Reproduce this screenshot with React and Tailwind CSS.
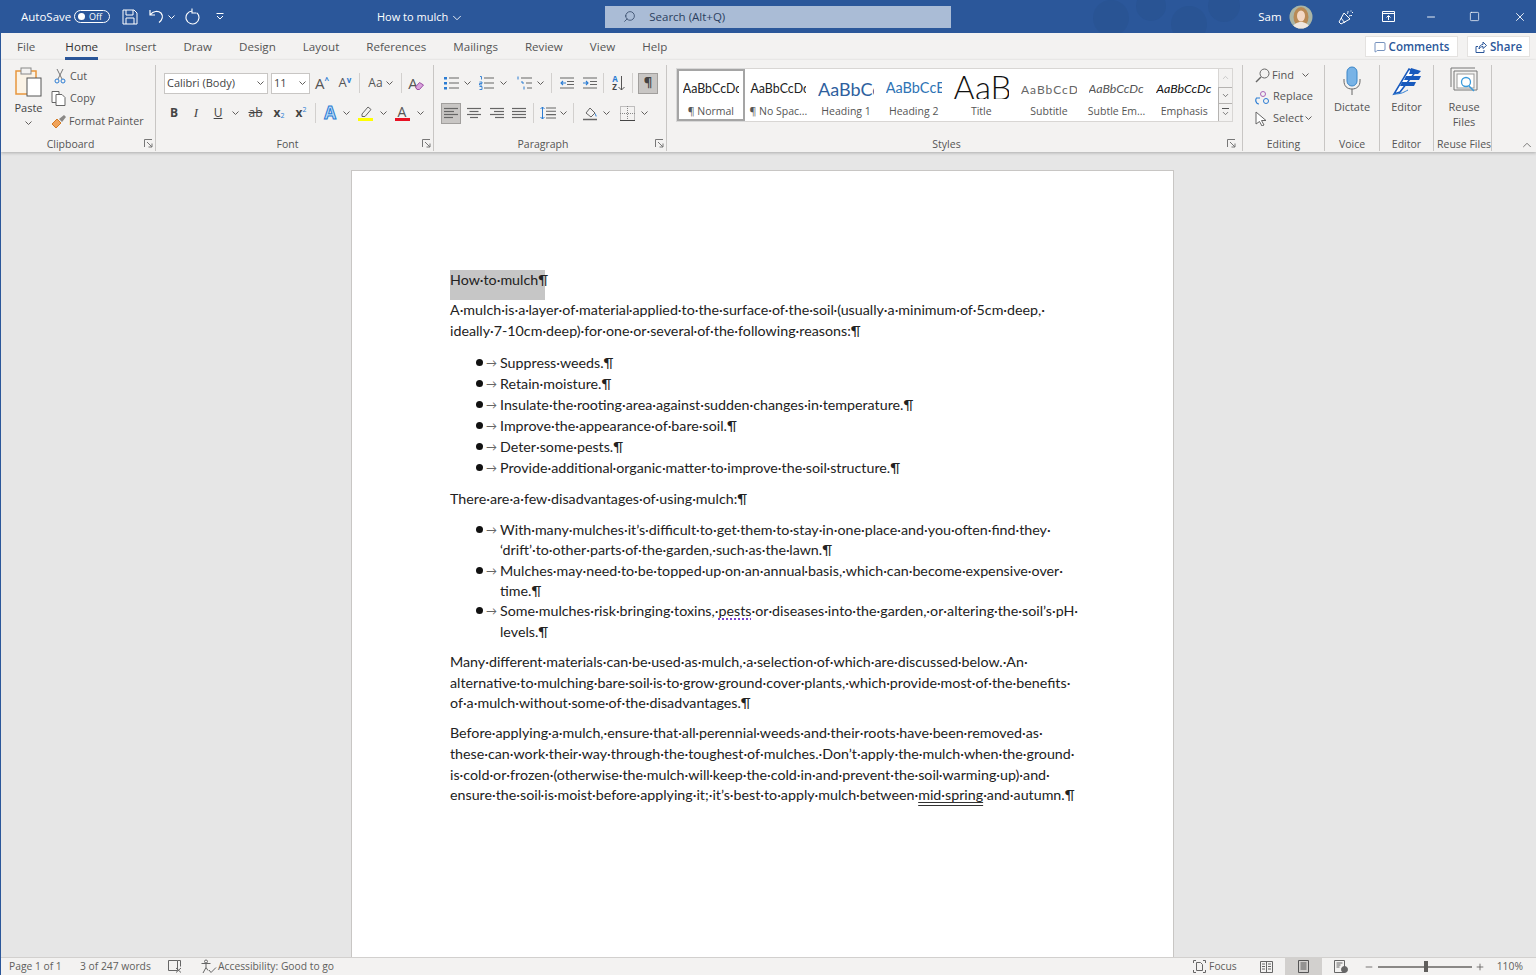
import {
  ChevronDown,
  ChevronUp,
  MessageSquare,
  Minus,
  Plus,
  Search,
  Square,
  X,
} from "lucide-react";

function Caret({ className = "", color = "#605e5c" }) {
  return (
    <svg width="7" height="4" viewBox="0 0 7 4" className={className} fill="none" stroke={color} strokeWidth="1">
      <path d="M0.500 0.500l3 3 3-3" />
    </svg>
  );
}

function Tool({ className = "", children }) {
  return <div className={`flex h-5 shrink-0 items-center justify-center ${className}`}>{children}</div>;
}

function Sep() {
  return <div className="h-5 w-px shrink-0 bg-[#d2d0ce]" />;
}

function Launcher({ className = "right-[2px]" }) {
  return (
    <svg width="9" height="9" viewBox="0 0 9 9" fill="none" stroke="#777" strokeWidth="1" className={`absolute top-[2px] ${className}`}>
      <path d="M0.500 8V0.500H8M3 3l5 5M8 4.500V8H4.500" />
    </svg>
  );
}

function Group({ label, className = "", labelClass = "", launcher = false, launcherClass, children }) {
  return (
    <div className={`mt-[5px] flex h-[86px] shrink-0 flex-col border-r border-[#c8c6c4] ${className}`}>
      <div className="h-[72px] shrink-0">{children}</div>
      <div className={`relative h-[14px] whitespace-nowrap text-center text-[10.500px] leading-[14px] text-[#555] ${labelClass}`}>
        {label}
        {launcher && <Launcher className={launcherClass} />}
      </div>
    </div>
  );
}

function TextLines({ rows, width = 14 }) {
  return (
    <svg width={width} height="12" viewBox={`0 0 ${width} 12`} stroke="#666" strokeWidth="1.200">
      {rows.map(([x1, x2], i) => (
        <line key={i} x1={x1} x2={x2} y1={1.500 + i * 3} y2={1.500 + i * 3} />
      ))}
    </svg>
  );
}

function Bullets() {
  return (
    <svg width="16" height="14" viewBox="0 0 16 14">
      <rect x="0" y="1" width="3" height="2.500" fill="#2b7cd3" />
      <rect x="0" y="6" width="3" height="2.500" fill="#2b7cd3" />
      <rect x="0" y="11" width="3" height="2.500" fill="#2b7cd3" />
      <path d="M5 2h10M5 7h10M5 12h10" stroke="#666" strokeWidth="1.200" />
    </svg>
  );
}

function Numbered() {
  return (
    <svg width="16" height="14" viewBox="0 0 16 14">
      <path d="M1 0.500h1.500v3M0.500 6h2.500v1.500H0.500v1.500H3M0.500 10.500H3v3H0.500" fill="none" stroke="#2b7cd3" strokeWidth="0.900" />
      <path d="M5 2h10M5 7h10M5 12h10" stroke="#666" strokeWidth="1.200" />
    </svg>
  );
}

function Multilevel() {
  return (
    <svg width="16" height="14" viewBox="0 0 16 14">
      <path d="M1 0.500v3M4 6h2v2M7 10.500v3" fill="none" stroke="#2b7cd3" strokeWidth="1" />
      <path d="M4 2h11M9 7h6M10 12h5" stroke="#666" strokeWidth="1.200" />
    </svg>
  );
}

function Indent({ flip = false }) {
  return (
    <svg width="14" height="12" viewBox="0 0 14 12">
      <path d="M0 1h14M7 4.500h7M7 7.500h7M0 11h14" stroke="#666" strokeWidth="1.100" />
      <path d={flip ? "M0 6h5M3 4l2 2-2 2" : "M1 6h5M3 4L1 6l2 2"} fill="none" stroke="#2b7cd3" strokeWidth="1.100" />
    </svg>
  );
}

function TopBar() {
  return (
    <div className="relative flex h-[33px] shrink-0 items-center bg-[#2b579a] pl-[20px] text-white">
      <svg className="pointer-events-none absolute left-[1088px] top-0" width="160" height="33" viewBox="0 0 160 33" fill="#295494">
        <circle cx="22" cy="18" r="18" />
        <circle cx="62" cy="6" r="15" />
        <circle cx="100" cy="24" r="18" />
        <circle cx="135" cy="6" r="16" />
      </svg>
      <span className="relative w-[48px] text-[11.500px]">AutoSave</span>
      <div className="relative ml-[5px] flex h-[13px] w-[36px] items-center rounded-full border border-white pl-[3px]">
        <span className="h-[7px] w-[7px] rounded-full bg-white" />
        <span className="ml-[4px] text-[9px] leading-none">Off</span>
      </div>
      <svg className="relative ml-[12px]" width="16" height="16" viewBox="0 0 16 16" fill="none" stroke="#fff" strokeWidth="1">
        <path d="M1 1h11l3 3v11H1zM4 1v5h7V1M4 15v-6h8v6" />
      </svg>
      <svg className="relative ml-[11px]" width="15" height="15" viewBox="0 0 15 15" fill="none" stroke="#fff" strokeWidth="1.200">
        <path d="M1 1v5h5M1.500 5.500C4 2 9 1.500 12 4c2.500 3 1.500 7-2 9.500" />
      </svg>
      <Caret color="#fff" className="relative ml-[4px]" />
      <svg className="relative ml-[9px]" width="17" height="17" viewBox="0 0 17 17" fill="none" stroke="#fff" strokeWidth="1.100">
        <path d="M8 3a6.500 6.500 0 1 0 5 1.800M8 0.500v4.500h4.500" />
      </svg>
      <svg className="relative ml-[15px]" width="8" height="7" viewBox="0 0 8 7" fill="none" stroke="#fff" strokeWidth="1">
        <path d="M0.500 0.500h7M1 3l3 3 3-3" />
      </svg>
      <span className="relative ml-[153px] mt-[2px] text-[11px]">How to mulch</span>
      <ChevronDown className="relative ml-[2px] mt-[2px]" size={14} strokeWidth={1.500} />
      <div className="relative ml-[141px] flex h-[22px] w-[346px] items-center bg-[#aabcd6] pl-[18px] text-[11.500px] text-[#2b3f5f]">
        <Search size={13} strokeWidth={1.400} className="-scale-x-100" />
        <span className="ml-[13px]">Search (Alt+Q)</span>
      </div>
      <span className="relative ml-[307px] text-[11.500px]">Sam</span>
      <svg className="relative ml-[7px]" width="24" height="24" viewBox="0 0 24 24">
        <clipPath id="avatar">
          <circle cx="12" cy="12" r="11.500" />
        </clipPath>
        <g clipPath="url(#avatar)">
          <rect width="24" height="24" fill="#aab5a6" />
          <ellipse cx="12" cy="12" rx="7.500" ry="10" fill="#b98a55" />
          <ellipse cx="12" cy="11" rx="4" ry="5.500" fill="#f4d8c4" />
          <path d="M3 24c1-5 5-7 9-7s8 2 9 7z" fill="#efe6de" />
        </g>
      </svg>
      <svg className="relative ml-[25px]" width="16" height="16" viewBox="0 0 16 16" fill="none" stroke="#fff" strokeWidth="1">
        <path d="M1 13L6 4l6 6-9 5zM3 9l4 5M9 5c1-1 1-2 1-3M11 7c1-.5 2-.5 3-.5M13 1.500v1M15 3.500h-1" />
      </svg>
      <svg className="relative ml-[28px]" width="13" height="11" viewBox="0 0 13 11" fill="none" stroke="#fff" strokeWidth="1">
        <path d="M0.500 0.500h12v10h-12zM0.500 2.500h12M6.500 9V5M4.500 6.500l2-2 2 2" />
      </svg>
      <Minus className="relative ml-[30px]" size={12} strokeWidth={1.800} />
      <Square className="relative ml-[32px]" size={11} strokeWidth={1.600} />
      <X className="relative ml-[33px]" size={14} strokeWidth={1.500} />
    </div>
  );
}

function Tabs() {
  const tabs = ["File", "Home", "Insert", "Draw", "Design", "Layout", "References", "Mailings", "Review", "View", "Help"];
  return (
    <div className="flex h-[27px] shrink-0 items-center pl-[16px] pr-[6px]">
      <div className="flex gap-[27px]">
        {tabs.map((t) => (
          <div
            key={t}
            className={`relative text-[11.600px] leading-[27px] ${
              t === "Home" ? "ml-[3px] font-medium text-[#333]" : "text-[#555]"
            }`}
          >
            {t}
            {t === "Home" && <span className="absolute inset-x-0 bottom-0 h-[3px] bg-[#2b579a]" />}
          </div>
        ))}
      </div>
      <div className="ml-auto flex items-center gap-[9px]">
        <div className="flex h-[21px] w-[93px] items-center justify-center gap-[3px] border border-[#e4e2e0] bg-white text-[11.600px] font-semibold text-[#2b579a]">
          <MessageSquare size={12} strokeWidth={1.300} />
          Comments
        </div>
        <div className="flex h-[21px] w-[63px] items-center justify-center gap-[3px] border border-[#e4e2e0] bg-white text-[11.600px] font-semibold text-[#2b579a]">
          <svg width="12" height="12" viewBox="0 0 12 12" fill="none" stroke="#2b579a" strokeWidth="1">
            <path d="M3 5.500H1v6h8V9M4 8c0-3 2-4.500 4-4.500V1l3.500 3.500L8 7.500V5.500C6 5.500 5 6.500 4 8z" />
          </svg>
          Share
        </div>
      </div>
    </div>
  );
}

function Clipboard() {
  return (
    <Group label="Clipboard" launcher className="w-[155px]" labelClass="pr-[15px]">
      <div className="flex">
        <div className="flex w-[50px] flex-col items-center pl-[5px] pt-[2px]">
          <svg width="28" height="31" viewBox="0 0 28 31">
            <rect x="1" y="4" width="20" height="23" fill="#fbf3e6" stroke="#e8963c" strokeWidth="1.500" />
            <rect x="6" y="1" width="10" height="6" fill="#f3f2f1" stroke="#888" />
            <rect x="12" y="11" width="14" height="18" fill="#fff" stroke="#555" />
          </svg>
          <span className="mt-[2px] text-[11px] leading-[16px] text-[#444]">Paste</span>
          <Caret className="mt-[5px]" />
        </div>
        <div className="flex flex-col text-[10.700px] text-[#555]">
          <div className="flex h-[22px] items-center pl-[3px]">
            <svg width="12" height="15" viewBox="0 0 12 15" fill="none">
              <path d="M3 0l5 10M9 0L4 10" stroke="#777" strokeWidth="1" />
              <circle cx="3" cy="12" r="2" stroke="#2b7cd3" />
              <circle cx="9" cy="12" r="2" stroke="#2b7cd3" />
            </svg>
            <span className="ml-[4px]">Cut</span>
          </div>
          <div className="flex h-[23px] items-center">
            <svg width="16" height="15" viewBox="0 0 16 15" fill="#fff" stroke="#666" strokeWidth="1">
              <path d="M1 0.500h7v11H1z" />
              <path d="M5 3.500h6l3 3v8H5z" />
            </svg>
            <span className="ml-[3px]">Copy</span>
          </div>
          <div className="flex h-[22px] items-center">
            <svg width="16" height="15" viewBox="0 0 16 15">
              <path d="M1 10l5-5 4 4-5 5z" fill="#f0a35a" stroke="#d47a24" />
              <path d="M8 5l5-4 2 2-4 5z" fill="#8a8886" />
            </svg>
            <span className="ml-[2px] whitespace-nowrap">Format Painter</span>
          </div>
        </div>
      </div>
    </Group>
  );
}

function Font() {
  return (
    <Group label="Font" launcher className="w-[278px]" labelClass="pr-[14px]">
      <div className="mt-[8px] flex h-[20px] items-center pl-[8px]">
        <div className="flex h-[21px] w-[104px] items-center justify-between border border-[#c8c6c4] bg-white pl-[2px] pr-[3px] text-[11px] text-[#444]">
          Calibri (Body)
          <Caret />
        </div>
        <div className="ml-[3px] flex h-[21px] w-[39px] items-center justify-between border border-[#c8c6c4] bg-white pl-[2px] pr-[3px] text-[11px] text-[#444]">
          11
          <Caret />
        </div>
        <Tool className="w-[24px] text-[15px] text-[#555]">
          A<span className="-mt-[7px] text-[8px] font-bold text-[#2b7cd3]">^</span>
        </Tool>
        <Tool className="w-[22px] text-[13px] text-[#555]">
          A<span className="-mt-[6px] text-[8px] font-bold text-[#2b7cd3]">v</span>
        </Tool>
        <Tool className="w-[3px]" />
        <Sep />
        <Tool className="w-[41px] gap-[3px] text-[12px] text-[#555]">
          Aa
          <Caret />
        </Tool>
        <Sep />
        <Tool className="ml-[3px] w-[22px] text-[15px] text-[#555]">
          A
          <svg className="-ml-[3px] mt-[6px]" width="9" height="8" viewBox="0 0 9 8">
            <path d="M0.500 5l4-4.500L8.500 3l-4 4.500H2z" fill="#d9a2dc" stroke="#9a4fa5" />
          </svg>
        </Tool>
      </div>
      <div className="mt-[10px] flex h-[20px] items-center pl-[7px] text-[12px] text-[#444]">
        <Tool className="w-[22px] font-bold">B</Tool>
        <Tool className="w-[22px] font-['Liberation_Serif',serif] text-[13px] italic">I</Tool>
        <Tool className="w-[22px] underline">U</Tool>
        <Tool className="w-[12px]">
          <Caret />
        </Tool>
        <Tool className="ml-[2px] w-[25px] line-through">ab</Tool>
        <Tool className="w-[22px] font-bold">
          x<span className="mt-[6px] text-[7px] font-normal text-[#2b7cd3]">2</span>
        </Tool>
        <Tool className="w-[22px] font-bold">
          x<span className="-mt-[6px] text-[7px] font-normal text-[#2b7cd3]">2</span>
        </Tool>
        <Tool className="w-[3px]" />
        <Sep />
        <Tool className="ml-[3px] w-[22px] text-[17px] font-bold text-[#bcdcf8] [-webkit-text-stroke:1px_#2b7cd3]">A</Tool>
        <Tool className="w-[10px]">
          <Caret />
        </Tool>
        <Tool className="ml-[2px] w-[26px]">
          <svg width="16" height="16" viewBox="0 0 16 16">
            <path d="M4 9l6-7 3 2.500-6 7H4z" fill="#f3f2f1" stroke="#666" />
            <rect x="0" y="13" width="15" height="3" fill="#ffff00" />
          </svg>
        </Tool>
        <Tool className="w-[8px]">
          <Caret />
        </Tool>
        <Tool className="ml-[2px] w-[26px]">
          <div className="flex flex-col items-center leading-[12px]">
            <span className="text-[14px] leading-[13px] text-[#555]">A</span>
            <span className="h-[3px] w-[15px] bg-[#e81123]" />
          </div>
        </Tool>
        <Tool className="w-[10px]">
          <Caret />
        </Tool>
      </div>
    </Group>
  );
}

function Paragraph() {
  return (
    <Group label="Paragraph" launcher className="w-[233px]" labelClass="pr-[14px]">
      <div className="mt-[8px] flex h-[20px] items-center pl-[9px]">
        <Tool className="w-[17px]"><Bullets /></Tool>
        <Tool className="w-[14px]"><Caret /></Tool>
        <Tool className="ml-[4px] w-[17px]"><Numbered /></Tool>
        <Tool className="w-[16px]"><Caret /></Tool>
        <Tool className="ml-[5px] w-[17px]"><Multilevel /></Tool>
        <Tool className="w-[14px]"><Caret /></Tool>
        <Tool className="w-[4px]" />
        <Sep />
        <Tool className="ml-[7px] w-[15px]"><Indent /></Tool>
        <Tool className="ml-[8px] w-[15px]"><Indent flip /></Tool>
        <Tool className="w-[6px]" />
        <Sep />
        <Tool className="ml-[6px] w-[17px]">
          <div className="flex items-center">
            <div className="flex flex-col text-[8px] font-bold leading-[8px] text-[#2b7cd3]">
              <span>A</span>
              <span className="text-[#444]">Z</span>
            </div>
            <svg width="7" height="15" viewBox="0 0 7 15" fill="none" stroke="#555" strokeWidth="1">
              <path d="M3.500 0v14M0.500 11l3 3 3-3" />
            </svg>
          </div>
        </Tool>
        <Tool className="w-[5px]" />
        <Sep />
        <div className="ml-[5px] flex h-[21px] w-[20px] items-center justify-center border border-[#a19f9d] bg-[#c8c6c4] text-[13px] font-bold text-[#444]">¶</div>
      </div>
      <div className="mt-[10px] flex h-[20px] items-center pl-[7px]">
        <div className="flex h-[21px] w-[20px] items-center justify-center border border-[#a19f9d] bg-[#c8c6c4]">
          <TextLines rows={[[0, 14], [0, 10], [0, 14], [0, 9]]} />
        </div>
        <Tool className="ml-[2px] w-[22px]"><TextLines rows={[[0, 14], [2.500, 11.500], [0, 14], [3, 11]]} /></Tool>
        <Tool className="w-[23px]"><TextLines rows={[[0, 14], [4, 14], [0, 14], [5, 14]]} /></Tool>
        <Tool className="w-[22px]"><TextLines rows={[[0, 14], [0, 14], [0, 14], [0, 14]]} /></Tool>
        <Tool className="w-[3px]" />
        <Sep />
        <Tool className="ml-[5px] w-[18px]">
          <svg width="16" height="14" viewBox="0 0 16 14">
            <path d="M2.500 1v12M0.500 3l2-2 2 2M0.500 11l2 2 2-2" fill="none" stroke="#2b7cd3" />
            <path d="M6 2h10M6 5.300h10M6 8.600h10M6 12h10" stroke="#666" strokeWidth="1.100" />
          </svg>
        </Tool>
        <Tool className="w-[12px]"><Caret /></Tool>
        <Tool className="w-[4px]" />
        <Sep />
        <Tool className="ml-[8px] w-[17px]">
          <svg width="16" height="16" viewBox="0 0 16 16">
            <path d="M3 8l4-5 5 5-4 4z" fill="none" stroke="#666" />
            <path d="M12 8c1 1.500 2 3 1.500 3.500S12 11 12 8z" fill="#2b7cd3" />
            <path d="M0 14.500h14" stroke="#666" strokeWidth="1.500" />
          </svg>
        </Tool>
        <Tool className="w-[14px]"><Caret /></Tool>
        <Tool className="ml-[6px] w-[17px]">
          <svg width="15" height="15" viewBox="0 0 15 15" fill="none" stroke="#888" strokeDasharray="1 1">
            <path d="M0.500 0.500h14v14h-14zM7.500 0v15M0 7.500h15" />
            <path d="M0 14.500h15" stroke="#444" strokeDasharray="none" />
          </svg>
        </Tool>
        <Tool className="w-[17px]"><Caret /></Tool>
      </div>
    </Group>
  );
}

function StyleCard({ preview, previewClass, label, selected }) {
  return (
    <div
      className={`flex h-[52px] flex-col items-center overflow-hidden ${
        selected ? "border-2 border-[#a5a5a5] bg-white outline outline-1 outline-[#d8d8d8]" : "border-2 border-white"
      }`}
    >
      <div className="mt-[3px] flex h-[25px] w-[56px] shrink-0 items-end overflow-hidden">
        <span className={`whitespace-nowrap ${previewClass}`}>{preview}</span>
      </div>
      <span className="mt-[4px] whitespace-nowrap text-[10.500px] leading-[16px] text-[#555]">{label}</span>
    </div>
  );
}

function Styles() {
  const cards = [
    { label: "¶ Normal", preview: "AaBbCcDc", previewClass: "font-['Lato'] text-[12.400px] text-[#222]", selected: true },
    { label: "¶ No Spac...", preview: "AaBbCcDc", previewClass: "font-['Lato'] text-[12.400px] text-[#222]" },
    { label: "Heading 1", preview: "AaBbCc", previewClass: "font-['Lato'] text-[18px] leading-[20px] text-[#2f5f9e]" },
    { label: "Heading 2", preview: "AaBbCcE", previewClass: "font-['Lato'] text-[14.500px] text-[#2f74b5]" },
    { label: "Title", preview: "AaB", previewClass: "font-['Lato'] font-light text-[33px] leading-[24px] text-[#111]" },
    { label: "Subtitle", preview: "AaBbCcD", previewClass: "font-['Lato'] text-[12px] tracking-[1px] text-[#666]" },
    { label: "Subtle Em...", preview: "AaBbCcDc", previewClass: "font-['Lato'] text-[12.400px] italic text-[#555]" },
    { label: "Emphasis", preview: "AaBbCcDc", previewClass: "font-['Lato'] text-[12.400px] italic text-[#111]" },
  ];
  return (
    <Group label="Styles" launcher launcherClass="right-[6px]" className="w-[576px]" labelClass="pr-[16px]">
      <div className="ml-[9px] mt-[3px] flex h-[54px] w-[557px] border border-[#d8d6d4]">
        <div className="grid flex-1 grid-cols-8 bg-white">
          {cards.map((c) => (
            <StyleCard key={c.label} {...c} />
          ))}
        </div>
        <div className="flex w-[14px] flex-col text-[#555]">
          <div className="flex h-[18px] items-center justify-center border-l border-[#d8d6d4]">
            <ChevronUp size={9} color="#bbb" />
          </div>
          <div className="flex h-[18px] items-center justify-center border border-r-0 border-[#b5b3b1]">
            <ChevronDown size={9} />
          </div>
          <div className="flex h-[17px] flex-col items-center justify-center border-l border-[#b5b3b1]">
            <div className="h-px w-[7px] bg-[#555]" />
            <ChevronDown size={9} />
          </div>
        </div>
      </div>
    </Group>
  );
}

function Editing() {
  return (
    <Group label="Editing" className="w-[82px]">
      <div className="-mt-px flex flex-col pl-[12px] text-[11px] text-[#555]">
        <div className="flex h-[22px] items-center">
          <svg width="15" height="15" viewBox="0 0 15 15" fill="none" stroke="#666">
            <circle cx="9.500" cy="5.500" r="4.500" />
            <path d="M6 9l-5 5" strokeWidth="1.500" />
          </svg>
          <span className="ml-[2px]">Find</span>
          <Caret className="ml-[8px]" />
        </div>
        <div className="flex h-[21px] items-center">
          <svg width="15" height="16" viewBox="0 0 15 16">
            <path d="M5 9H1.500C0 11 1 15 4 15" fill="none" stroke="#2b7cd3" strokeWidth="1.200" />
            <circle cx="8" cy="5" r="2.500" fill="none" stroke="#a864b8" />
            <circle cx="11" cy="12" r="2.500" fill="none" stroke="#2b7cd3" />
          </svg>
          <span className="ml-[3px]">Replace</span>
        </div>
        <div className="flex h-[22px] items-center">
          <svg width="12" height="15" viewBox="0 0 12 15" fill="#fff" stroke="#666">
            <path d="M1 1l10 8.500H6.500L9 14l-2 1-2.500-4.500L1 13z" />
          </svg>
          <span className="ml-[6px]">Select</span>
          <Caret className="ml-[2px]" />
        </div>
      </div>
    </Group>
  );
}

function Big({ label, icon, lines }) {
  return (
    <div className="flex flex-col items-center text-[11px] leading-[15px] text-[#555]">
      <div className="flex h-[32px] items-center">{icon}</div>
      <span className="mt-[2px]">{label}</span>
      {lines && <span>{lines}</span>}
    </div>
  );
}

function RightGroups() {
  return (
    <>
      <Group label="Voice" className="w-[55px]">
        <Big
          label="Dictate"
          icon={
            <svg width="18" height="30" viewBox="0 0 18 30" fill="none">
              <rect x="4" y="1" width="10" height="19" rx="5" fill="#78b3e6" stroke="#3a86c8" />
              <path d="M1 13v2c0 5 3 8 8 8s8-3 8-8v-2" stroke="#666" />
              <path d="M9 23v6" stroke="#666" />
            </svg>
          }
        />
      </Group>
      <Group label="Editor" className="w-[54px]">
        <Big
          label="Editor"
          icon={
            <svg width="30" height="30" viewBox="0 0 30 30">
              <path d="M2 28L17 3l6 3.500L8 26z" fill="#fff" stroke="#185abd" strokeWidth="1.500" />
              <path d="M19 2l10 3-3 3H17zM14 10h15l-2 4H12zM10 16h14l-2 4H8z" fill="#185abd" />
              <path d="M2 28c8 0 10-2 14-4" fill="none" stroke="#2b7cd3" />
            </svg>
          }
        />
      </Group>
      <Group label="Reuse Files" className="w-[58px] pl-[3px]">
        <Big
          label="Reuse"
          lines="Files"
          icon={
            <svg width="30" height="28" viewBox="0 0 30 28" fill="none">
              <path d="M2 20V1h24M5 23V4h23v19z" stroke="#777" />
              <rect x="8" y="7" width="17" height="14" fill="#fff" stroke="#999" />
              <circle cx="17" cy="15" r="4.500" stroke="#3a9bdc" strokeWidth="1.300" />
              <path d="M20 19l5 5" stroke="#3a9bdc" strokeWidth="1.500" />
            </svg>
          }
        />
      </Group>
    </>
  );
}

function Ribbon() {
  return (
    <div className="relative z-10 flex h-[92px] shrink-0 bg-[#f3f2f1] shadow-[0_1px_3px_rgba(0,0,0,0.25)]">
      <Clipboard />
      <Font />
      <Paragraph />
      <Styles />
      <Editing />
      <RightGroups />
      <ChevronUp className="absolute bottom-0 right-[2px]" size={14} color="#555" strokeWidth={1.300} />
    </div>
  );
}

function P({ lines, className = "", rowClass = "h-[20.600px]" }) {
  return (
    <div className={className}>
      {lines.map((l, i) => (
        <div key={i} className={`whitespace-nowrap ${rowClass}`}>
          {l}
        </div>
      ))}
    </div>
  );
}

function Li({ lines, rowClass }) {
  return (
    <div className="relative pl-[50px]">
      <span className="absolute left-[26px] top-[6px] h-[7px] w-[7px] rounded-full bg-[#111]" />
      <span className="absolute left-[36px] top-0 text-[11px] leading-[20.600px] text-[#666]">→</span>
      <P lines={lines} rowClass={rowClass} />
    </div>
  );
}

function Doc() {
  const tall = "h-[21px]";
  const snug = "h-[20.400px]";
  return (
    <div className="min-h-0 flex-1 overflow-hidden bg-[#e6e6e6] pt-[18px]">
      <div className="ml-[350px] h-[800px] w-[823px] border border-[#c8c6c4] bg-white pl-[98px] pt-[99px] font-['Lato',sans-serif] text-[14.260px] leading-[20.600px] text-[#222]">
        <div className="h-[30px] w-[95px] whitespace-nowrap bg-[#c6c6c6]">How·to·mulch¶</div>
        <P lines={["A·mulch·is·a·layer·of·material·applied·to·the·surface·of·the·soil·(usually·a·minimum·of·5cm·deep,·", "ideally·7-10cm·deep)·for·one·or·several·of·the·following·reasons:¶"]} />
        <div className="mt-[12px]">
          <Li rowClass={tall} lines={["Suppress·weeds.¶"]} />
          <Li rowClass={tall} lines={["Retain·moisture.¶"]} />
          <Li rowClass={tall} lines={["Insulate·the·rooting·area·against·sudden·changes·in·temperature.¶"]} />
          <Li rowClass={tall} lines={["Improve·the·appearance·of·bare·soil.¶"]} />
          <Li rowClass={tall} lines={["Deter·some·pests.¶"]} />
          <Li rowClass={tall} lines={["Provide·additional·organic·matter·to·improve·the·soil·structure.¶"]} />
        </div>
        <P className="mt-[10px]" lines={["There·are·a·few·disadvantages·of·using·mulch:¶"]} />
        <div className="mt-[10px]">
          <Li rowClass={snug} lines={["With·many·mulches·it’s·difficult·to·get·them·to·stay·in·one·place·and·you·often·find·they·", "‘drift’·to·other·parts·of·the·garden,·such·as·the·lawn.¶"]} />
          <Li rowClass={snug} lines={["Mulches·may·need·to·be·topped·up·on·an·annual·basis,·which·can·become·expensive·over·", "time.¶"]} />
          <Li
            rowClass={snug}
            lines={[
              <>
                Some·mulches·risk·bringing·toxins,·
                <span className="underline decoration-[#7a3fd0] decoration-dotted decoration-2 underline-offset-2 [text-decoration-skip-ink:none]">pests</span>
                ·or·diseases·into·the·garden,·or·altering·the·soil’s·pH·
              </>,
              "levels.¶",
            ]}
          />
        </div>
        <P className="mt-[10px]" lines={["Many·different·materials·can·be·used·as·mulch,·a·selection·of·which·are·discussed·below.·An·", "alternative·to·mulching·bare·soil·is·to·grow·ground·cover·plants,·which·provide·most·of·the·benefits·", "of·a·mulch·without·some·of·the·disadvantages.¶"]} />
        <P
          className="mt-[9.500px]"
          lines={[
            "Before·applying·a·mulch,·ensure·that·all·perennial·weeds·and·their·roots·have·been·removed·as·",
            "these·can·work·their·way·through·the·toughest·of·mulches.·Don’t·apply·the·mulch·when·the·ground·",
            "is·cold·or·frozen·(otherwise·the·mulch·will·keep·the·cold·in·and·prevent·the·soil·warming·up)·and·",
            <>
              ensure·the·soil·is·moist·before·applying·it;·it’s·best·to·apply·mulch·between·
              <span className="underline decoration-[#333] decoration-double underline-offset-2 [text-decoration-skip-ink:none]">mid·spring</span>
              ·and·autumn.¶
            </>,
          ]}
        />
      </div>
    </div>
  );
}

function StatusBar() {
  return (
    <div className="flex h-[18px] shrink-0 items-center border-t border-[#d2d0ce] bg-[#f3f2f1] pl-[8px] text-[10.300px] text-[#605e5c]">
      <span className="w-[71px] whitespace-nowrap">Page 1 of 1</span>
      <span className="w-[88px] whitespace-nowrap">3 of 247 words</span>
      <svg width="14" height="13" viewBox="0 0 14 13" fill="none" stroke="#666">
        <path d="M0.500 0.500h9v10h-9zM9.500 0.500h3v6M8 8l5 4.500M13 8l-5 4.500" />
      </svg>
      <svg className="ml-[19px]" width="16" height="15" viewBox="0 0 16 15" fill="none" stroke="#666">
        <circle cx="5" cy="2.500" r="1.500" />
        <path d="M0.500 4.500h9M5 4.500v4L2 14M5 8.500l2 3M8 11l2 2.500 5-5" />
      </svg>
      <span className="ml-[1px] whitespace-nowrap">Accessibility: Good to go</span>
      <svg className="ml-[859px]" width="13" height="13" viewBox="0 0 13 13" fill="none" stroke="#666">
        <path d="M3.500 2.500h4l2 2v6h-6zM0.500 3V0.500H3M10 0.500h2.500V3M0.500 10v2.500H3M10 12.500h2.500V10" />
      </svg>
      <span className="ml-[3px]">Focus</span>
      <svg className="ml-[23px]" width="13" height="12" viewBox="0 0 13 12" fill="none" stroke="#666">
        <path d="M0.500 0.500h12v11h-12zM6.500 0.500v11M2 3h3M2 5.500h3M2 8h3M8 3h3M8 5.500h3M8 8h3" />
      </svg>
      <div className="ml-[12px] flex h-full w-[37px] items-center justify-center bg-[#d2d0ce]">
        <svg width="11" height="13" viewBox="0 0 11 13" fill="none" stroke="#555">
          <path d="M0.500 0.500h10v12h-10zM2.500 3h6M2.500 5h6M2.500 7h6M2.500 9h6" />
        </svg>
      </div>
      <svg className="ml-[12px]" width="14" height="13" viewBox="0 0 14 13" fill="none" stroke="#666">
        <path d="M0.500 0.500h10v12h-10zM2.500 3h6M2.500 5h4M2.500 7h3" />
        <circle cx="10.500" cy="9.500" r="3" fill="#666" />
      </svg>
      <Minus className="ml-[16px]" size={10} />
      <div className="relative ml-[4px] flex h-[11px] w-[94px] items-center">
        <div className="h-[2px] w-full bg-[#8a8886]" />
        <div className="absolute left-[46px] h-[11px] w-[4px] bg-[#605e5c]" />
      </div>
      <Plus className="ml-[3px]" size={10} />
      <span className="ml-[12px]">110%</span>
    </div>
  );
}

export default function App() {
  return (
    <div className="flex h-[975px] w-[1536px] flex-col overflow-hidden border-l border-[#2b579a] bg-[#f3f2f1] font-['Open_Sans',sans-serif]">
      <TopBar />
      <Tabs />
      <Ribbon />
      <Doc />
      <StatusBar />
    </div>
  );
}
